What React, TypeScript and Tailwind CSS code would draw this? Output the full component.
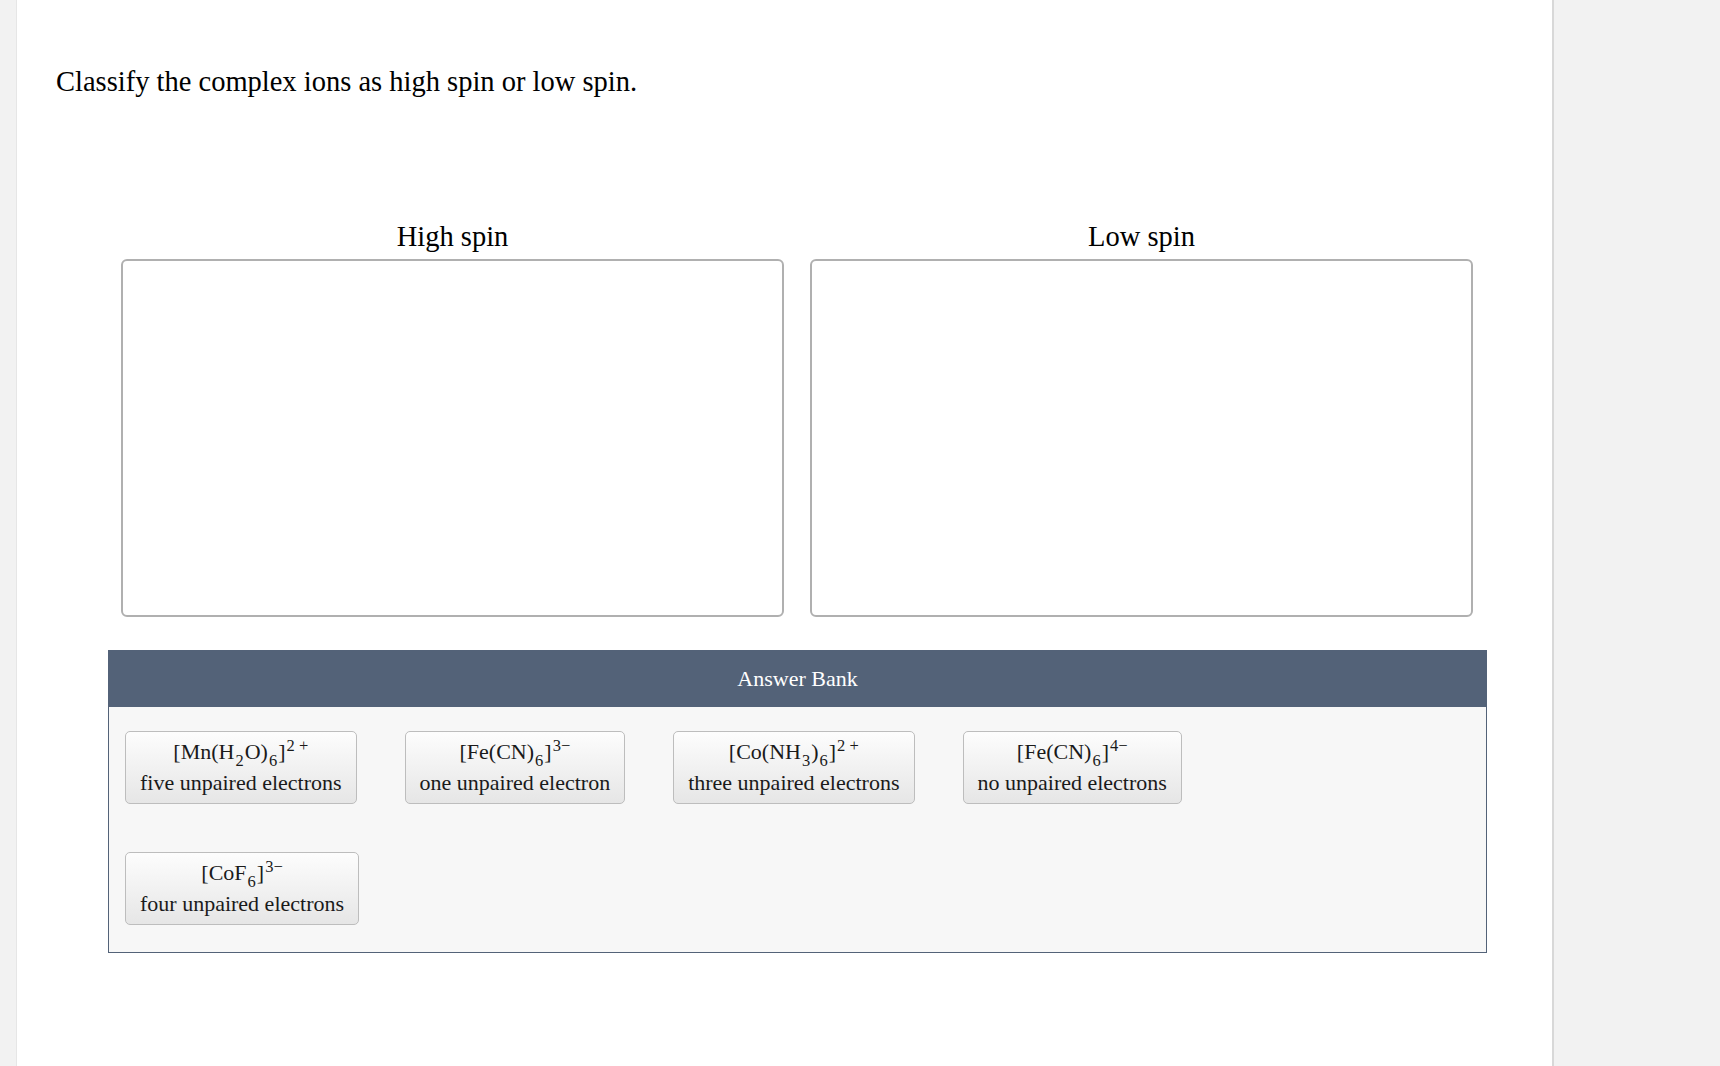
import React from "react";

const serif = { fontFamily: '"Liberation Serif", "Times New Roman", Times, serif' };

function Sub({ children }: { children: React.ReactNode }) {
  return <sub className="-bottom-[0.4em] mx-[1px]">{children}</sub>;
}

function Sup({ children }: { children: React.ReactNode }) {
  return <sup className="-top-[0.48em] ml-[1px]">{children}</sup>;
}

function Chip({ formula, text }: { formula: React.ReactNode; text: string }) {
  return (
    <div className="h-[73px] flex flex-col items-center justify-center px-[14px] border border-[#bdbdbd] rounded-[5px] bg-gradient-to-b from-[#fdfdfd] to-[#e6e6e6] text-[22px] text-[#1a1a1a] whitespace-nowrap">
      <div className="leading-[31px]">{formula}</div>
      <div className="leading-[32px]">{text}</div>
    </div>
  );
}

export default function App() {
  return (
    <div className="w-[1720px] min-h-[1066px] bg-[#f2f2f2] flex" style={serif}>
      <div className="ml-[16px] w-[1538px] min-h-[1066px] bg-white border-l border-[#e6e6e6] border-r-2 border-r-[#d8d8d8] text-black">
        <div className="pt-[65px] pl-[39px] text-[28.5px] leading-[34px]">
          Classify the complex ions as high spin or low spin.
        </div>

        <div className="mt-[121px] ml-[104px] w-[1352px] grid grid-cols-2 gap-x-[26px]">
          <div className="flex flex-col">
            <div className="text-center text-[28.5px] leading-[34px] mb-[5px]">High spin</div>
            <div className="h-[358px] border-2 border-[#b0b0b0] rounded-[6px] bg-white" />
          </div>
          <div className="flex flex-col">
            <div className="text-center text-[28.5px] leading-[34px] mb-[5px]">Low spin</div>
            <div className="h-[358px] border-2 border-[#b0b0b0] rounded-[6px] bg-white" />
          </div>
        </div>

        <div className="mt-[33px] ml-[91px] w-[1379px]">
          <div className="h-[57px] bg-[#536278] flex items-center justify-center text-white text-[22px]">
            Answer Bank
          </div>
          <div className="bg-[#f7f7f7] border-x border-b border-[#536278] pt-[24px] pb-[27px] pl-[16px] flex flex-col gap-y-[48px]">
            <div className="flex gap-x-[48px]">
              <Chip
                formula={
                  <>
                    [Mn(H<Sub>2</Sub>O)<Sub>6</Sub>]<Sup>2 +</Sup>
                  </>
                }
                text="five unpaired electrons"
              />
              <Chip
                formula={
                  <>
                    [Fe(CN)<Sub>6</Sub>]<Sup>3−</Sup>
                  </>
                }
                text="one unpaired electron"
              />
              <Chip
                formula={
                  <>
                    [Co(NH<Sub>3</Sub>)<Sub>6</Sub>]<Sup>2 +</Sup>
                  </>
                }
                text="three unpaired electrons"
              />
              <Chip
                formula={
                  <>
                    [Fe(CN)<Sub>6</Sub>]<Sup>4−</Sup>
                  </>
                }
                text="no unpaired electrons"
              />
            </div>
            <div className="flex">
              <Chip
                formula={
                  <>
                    [CoF<Sub>6</Sub>]<Sup>3−</Sup>
                  </>
                }
                text="four unpaired electrons"
              />
            </div>
          </div>
        </div>
      </div>
    </div>
  );
}
